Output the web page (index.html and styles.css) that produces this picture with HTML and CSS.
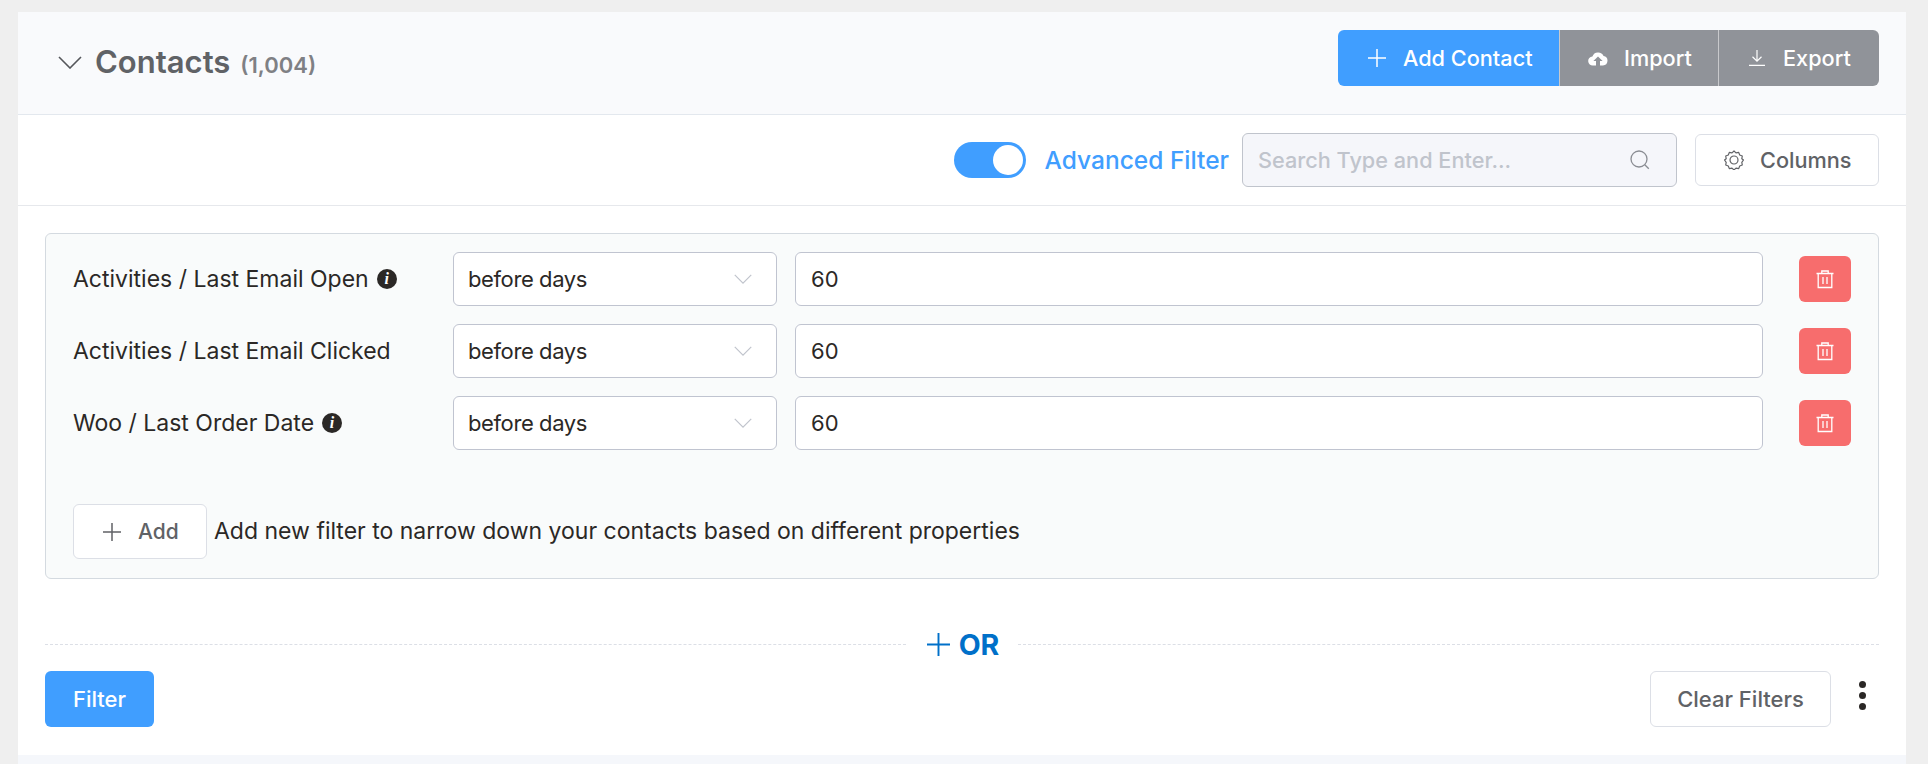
FILE: index.html
```html
<!DOCTYPE html>
<html lang="en">
<head>
<meta charset="utf-8">
<title>Contacts</title>
<link rel="stylesheet" href="styles.css">
</head>
<body>
<svg class="defs" width="0" height="0" aria-hidden="true">
  <symbol id="chev" viewBox="0 0 24 13"><path d="M1 1l11 11L23 1" fill="none" stroke="currentColor" stroke-width="1.6"/></symbol>
  <symbol id="plus" viewBox="0 0 18 18"><path d="M9 0v18M0 9h18" fill="none" stroke="currentColor" stroke-width="1.5"/></symbol>
  <symbol id="trash" viewBox="0 0 20 20"><path d="M1.500 4.500h17M3.200 4.500v14h13.600v-14M6.800 4.500V2h6.400v2.500M8 8v7M12 8v7" fill="none" stroke="currentColor" stroke-width="1.300"/></symbol>
</svg>
<main class="panel">
  <header class="head">
    <div class="title">
      <svg class="title-chev"><use href="#chev"/></svg>
      <h1>Contacts</h1>
      <span class="count">(1,004)</span>
    </div>
    <div class="actions">
      <button class="act act-blue"><svg class="ico"><use href="#plus"/></svg>Add Contact</button>
      <button class="act act-gray act-import"><svg class="ico-cloud" viewBox="0 0 20 16"><path d="M5 15.5a4.5 4.5 0 0 1-.6-9A6 6 0 0 1 15.6 6a4.8 4.8 0 0 1-.6 9.5h-3V11h2.6L10 6.5 5.4 11H8v4.500z" fill="currentColor"/></svg>Import</button>
      <button class="act act-gray act-export"><svg class="ico-dl" viewBox="0 0 16 16"><path d="M8 0v11M3.500 6.800 8 11.200l4.500-4.400M0 15.300h16" fill="none" stroke="currentColor" stroke-width="1.200"/></svg>Export</button>
    </div>
  </header>

  <section class="toolbar">
    <span class="toggle"><span class="knob"></span></span>
    <span class="adv">Advanced Filter</span>
    <div class="search">
      <span class="ph">Search Type and Enter...</span>
      <svg class="ico-search" viewBox="0 0 20 20"><circle cx="9" cy="9" r="8" fill="none" stroke="currentColor" stroke-width="1.300"/><path d="M14.800 14.800l4 4" fill="none" stroke="currentColor" stroke-width="1.300"/></svg>
    </div>
    <button class="btn-line btn-cols"><svg class="ico-gear" viewBox="0 0 20 20"><path d="M10 1l2 1.900 2.700-.5 1 2.600 2.600 1-.5 2.700L19.500 10l-1.700 2.300.5 2.700-2.600 1-1 2.600-2.700-.5-2 1.900-2-1.900-2.700.5-1-2.600-2.600-1 .5-2.700L.5 10l1.700-1.300-.5-2.700 2.600-1 1-2.600 2.700.5z" fill="none" stroke="currentColor" stroke-width="1.200" stroke-linejoin="round"/><circle cx="10" cy="10" r="4" fill="none" stroke="currentColor" stroke-width="1.200"/></svg>Columns</button>
  </section>

  <section class="body">
    <div class="box">
      <div class="row">
        <div class="label">Activities / Last Email Open<span class="info">i</span></div>
        <div class="select"><span>before days</span><svg class="sel-chev"><use href="#chev"/></svg></div>
        <div class="input">60</div>
        <button class="del"><svg class="ico-trash"><use href="#trash"/></svg></button>
      </div>
      <div class="row">
        <div class="label">Activities / Last Email Clicked</div>
        <div class="select"><span>before days</span><svg class="sel-chev"><use href="#chev"/></svg></div>
        <div class="input">60</div>
        <button class="del"><svg class="ico-trash"><use href="#trash"/></svg></button>
      </div>
      <div class="row">
        <div class="label">Woo / Last Order Date<span class="info">i</span></div>
        <div class="select"><span>before days</span><svg class="sel-chev"><use href="#chev"/></svg></div>
        <div class="input">60</div>
        <button class="del"><svg class="ico-trash"><use href="#trash"/></svg></button>
      </div>
      <div class="add-row">
        <button class="btn-add"><svg class="ico"><use href="#plus"/></svg>Add</button>
        <span class="hint">Add new filter to narrow down your contacts based on different properties</span>
      </div>
    </div>

    <div class="or-row">
      <span class="dots"></span>
      <span class="or"><svg class="ico-or"><use href="#plus"/></svg>OR</span>
      <span class="dots"></span>
    </div>

    <div class="foot">
      <button class="btn-filter">Filter</button>
      <div class="foot-right">
        <button class="btn-line btn-clear">Clear Filters</button>
        <span class="more"><i></i><i></i><i></i></span>
      </div>
    </div>
  </section>
</main>
</body>
</html>
```

FILE: styles.css
```css
* { box-sizing: border-box; }
html, body { margin: 0; height: 764px; overflow: hidden; }
body {
  background: #efefef;
  padding: 12px 22px 0 18px;
  font-family: Inter, "Liberation Sans", sans-serif;
  font-size: 22px;
  color: #2b2826;
}
button { font: inherit; cursor: pointer; margin: 0; }
.defs { position: absolute; }

.panel { height: 752px; background: #f5f7fb; }

.head {
  height: 103px;
  background: #f9fafc;
  border-bottom: 1px solid #e3e8ee;
  padding: 18px 27px 0 40px;
  display: flex;
  justify-content: space-between;
  align-items: flex-start;
}
.title { display: flex; align-items: baseline; height: 56px; padding-top: 12px; }
.title-chev { width: 24px; height: 13px; color: #55575b; margin: 14px 13px 0 0; align-self: flex-start; }
.title h1 { margin: 0; font-size: 31px; font-weight: 600; color: #606266; line-height: 40px; }
.count { font-size: 22px; font-weight: 600; color: #7f8084; margin-left: 10px; }

.actions { display: flex; height: 56px; }
.act {
  border: 0;
  color: #fff;
  font-size: 21.700px;
  font-weight: 500;
  display: flex;
  align-items: center;
  padding: 0;
}
.act-blue { width: 221px; background: #409eff; border-radius: 6px 0 0 6px; padding-left: 30px; }
.act-gray { background: #909399; border-left: 1px solid #c8c9cc; }
.act-import { width: 159px; padding-left: 28px; }
.act-export { width: 161px; padding-left: 30px; border-radius: 0 6px 6px 0; }
.ico { width: 18px; height: 18px; margin-right: 17px; flex: none; }
.ico-cloud { width: 20px; height: 16px; margin-right: 16px; }
.ico-dl { width: 16px; height: 16px; margin-right: 18px; }

.toolbar {
  height: 91px;
  background: #fff;
  border-bottom: 1px solid #e6e8ec;
  padding: 0 27px;
  display: flex;
  align-items: center;
  justify-content: flex-end;
}
.toggle {
  width: 72px;
  height: 36px;
  border-radius: 18px;
  background: #409eff;
  padding: 3px;
  display: flex;
  justify-content: flex-end;
  margin-right: 19px;
}
.knob { width: 30px; height: 30px; border-radius: 50%; background: #fff; }
.adv { color: #409eff; font-size: 24.500px; font-weight: 500; margin-right: 13px; }
.search {
  width: 435px;
  height: 54px;
  background: #f5f6fa;
  border: 1px solid #c0c4cc;
  border-radius: 6px;
  padding: 0 26px 0 15px;
  display: flex;
  align-items: center;
  justify-content: space-between;
  margin-right: 18px;
}
.ph { color: #c0c4cc; font-size: 21.700px; font-weight: 500; }
.ico-search { width: 20px; height: 20px; color: #8a8d93; }
.btn-line {
  background: #fff;
  border: 1px solid #dcdfe6;
  border-radius: 6px;
  color: #606266;
  font-size: 21.700px;
  font-weight: 500;
}
.btn-cols { width: 184px; height: 52px; display: flex; align-items: center; padding: 0 0 0 28px; }
.ico-gear { width: 20px; height: 20px; margin-right: 16px; }

.body { background: #fff; height: 549px; padding: 27px 27px 0; }
.box {
  height: 346px;
  background: #f9fbfb;
  border: 1px solid #d4dae0;
  border-radius: 6px;
  padding: 18px 27px;
}
.row { display: flex; align-items: center; height: 54px; margin-bottom: 18px; }
.label { width: 380px; flex: none; display: flex; align-items: center; gap: 8px; font-size: 23px; }
.info {
  width: 20px;
  height: 20px;
  border-radius: 50%;
  background: #2b2826;
  color: #fff;
  font: italic 700 16px/20px "Liberation Serif", serif;
  text-align: center;
}
.select, .input {
  height: 54px;
  background: #fff;
  border: 1px solid #c0c4d0;
  border-radius: 6px;
  display: flex;
  align-items: center;
  padding: 0 15px;
}
.select { width: 324px; flex: none; justify-content: space-between; padding: 0 24px 0 14px; margin-right: 18px; letter-spacing: -.4px; }
.sel-chev { width: 18px; height: 10px; color: #c0c4cc; }
.input { flex: 1; }
.del {
  width: 52px;
  height: 46px;
  flex: none;
  margin: 0 0 0 36px;
  border: 0;
  border-radius: 6px;
  background: #f76d6d;
  color: #fff;
  display: flex;
  align-items: center;
  justify-content: center;
  padding: 0;
}
.ico-trash { width: 20px; height: 20px; }

.add-row { display: flex; align-items: center; margin-top: 54px; }
.btn-add {
  width: 134px;
  height: 55px;
  background: #fff;
  border: 1px solid #dcdfe6;
  border-radius: 6px;
  color: #606266;
  font-size: 21px;
  font-weight: 500;
  display: flex;
  align-items: center;
  padding: 0 0 0 29px;
  margin-right: 7px;
}
.btn-add .ico { margin-right: 17px; }
.hint { font-size: 23px; margin-bottom: 2px; }

.or-row { display: flex; align-items: center; height: 40px; margin-top: 45px; }
.dots { flex: 1; border-top: 1px dashed #dcdfe6; }
.or {
  display: flex;
  align-items: center;
  padding: 0 19px 0 21px;
  color: #0070c9;
  font-size: 28.500px;
  font-weight: 700;
}
.ico-or { width: 23px; height: 23px; margin-right: 9px; }

.foot { display: flex; justify-content: space-between; margin-top: 7px; height: 56px; }
.btn-filter {
  width: 109px;
  background: #409eff;
  border: 0;
  border-radius: 6px;
  color: #fff;
  font-size: 22px;
  font-weight: 500;
  padding: 0;
}
.foot-right { display: flex; align-items: center; }
.btn-clear { width: 181px; height: 56px; padding: 0; font-size: 22px; }
.more { display: flex; flex-direction: column; gap: 4px; width: 48px; align-items: flex-end; padding-right: 13px; margin-bottom: 7px; }
.more i { width: 7px; height: 7px; border-radius: 50%; background: #2b2826; }
```
